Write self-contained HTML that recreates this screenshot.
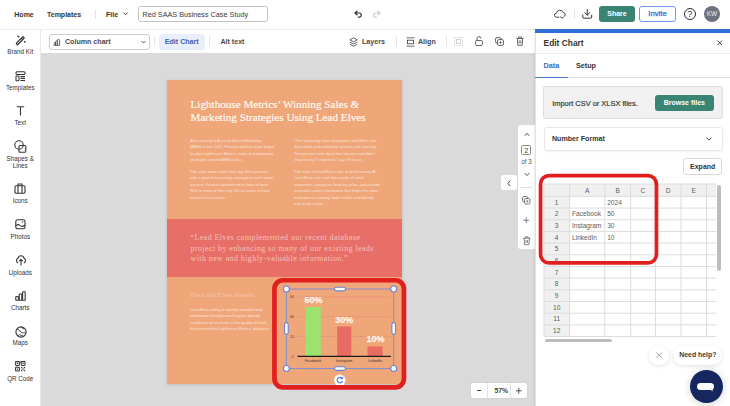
<!DOCTYPE html>
<html><head><meta charset="utf-8">
<style>
*{box-sizing:border-box;margin:0;padding:0}
html,body{width:730px;height:406px;overflow:hidden;background:#fff;font-family:"Liberation Sans",sans-serif;color:#2a2a2a}
.a{position:absolute}
.t{position:absolute;white-space:nowrap;line-height:1}
svg{position:absolute;overflow:visible}
.sb{font-size:6.3px;color:#333;text-align:center;width:40.5px;left:0}
.tb{font-size:7.1px;font-weight:bold;color:#4a4a4a}
.dt{position:absolute;font-size:7.8px;line-height:13px;color:#fff3ea;opacity:.8;white-space:nowrap;transform:scale(.5);transform-origin:0 0}
.cell{position:absolute;font-size:6.6px;color:#5e5e5e;line-height:1;white-space:nowrap}
</style></head><body>

<!-- ============ CANVAS ============ -->
<div class="a" style="left:41px;top:53px;width:494px;height:353px;background:#dadada"></div>


<!-- ============ DOC ============ -->
<div class="a" style="left:167px;top:80px;width:235px;height:303.5px;background:#efa679;box-shadow:0 1px 3px rgba(0,0,0,.13)"></div>
<div class="a" style="left:167px;top:219.2px;width:235px;height:57.4px;background:#e76f67"></div>
<div id="ttl" class="t" style="left:190.5px;top:98px;font-family:'Liberation Serif',serif;font-size:11.15px;line-height:12.7px;color:#fff8f0;-webkit-text-stroke:0.2px #fff8f0">Lighthouse Metrics&#8217; Winning Sales &amp;<br>Marketing Strategies Using Lead Elves</div>
<div class="dt" style="left:190px;top:136.9px">After moving to Account Based Marketing<br>(ABM) in late 2021, Frances and her team began<br>to align Lighthouse Metrics&#8217; sales and marketing<br>strategies around ABM tactics.</div>
<div class="dt" style="left:190px;top:167.9px">The sales team chose their top 100 accounts<br>with a goal of increasing coverage in each major<br>account. Frances determined to have at least<br>90% or more of their top 100 accounts to have<br>at least 4-6 contacts.</div>
<div class="dt" style="left:294px;top:136.9px">&#8220;The marketing team integrated Lead Elves into<br>their email and marketing systems one morning.<br>The process took about five minutes and didn&#8217;t<br>require any IT expertise,&#8221; says Frances.</div>
<div class="dt" style="left:294px;top:167.9px">The value of Lead Elves was in its Discovery AI.<br>Lead Elves can scan thousands of email<br>responses, categorize them by value, and provide<br>essential contact information that helps the sales<br>team pursue existing leads further and identify<br>new leads easily.</div>
<div id="quote" class="t" style="left:190.5px;top:233px;font-family:'Liberation Serif',serif;font-size:7.9px;letter-spacing:0.45px;line-height:10.6px;color:#f4b8ae;-webkit-text-stroke:0.1px #f4b8ae"><span>&#8220;Lead Elves complemented our recent database</span><br><span>project by enhancing so many of our existing leads</span><br><span>with new and highly-valuable information.&#8221;</span></div>
<div id="res" class="t" style="left:189.5px;top:291.9px;font-family:'Liberation Serif',serif;font-size:6.9px;color:#f6c6ad">The Lead Elves Results</div>
<div class="dt" style="left:189.5px;top:306px">Lead Elves ability to identify valuable lead<br>information through email replies directly<br>resulted in an increase in the quality of leads<br>that entered the Lighthouse Metrics' database.</div>


<!-- ============ CHART ============ -->
<svg style="left:270px;top:275px" width="140" height="120" viewBox="270 275 140 120">
  <g stroke="#ea8c78" stroke-width="0.6">
    <line x1="297.5" y1="296.8" x2="390.5" y2="296.8"/>
    <line x1="297.5" y1="316.6" x2="390.5" y2="316.6"/>
    <line x1="297.5" y1="336.5" x2="390.5" y2="336.5"/>
  </g>
  <g font-family="Liberation Sans" font-size="3.7" fill="#5e4033" text-anchor="end">
    <text x="294" y="298.1">60</text><text x="294" y="317.9">40</text><text x="294" y="337.8">20</text><text x="293.6" y="357.6">0</text>
  </g>
  <rect x="305.7" y="307" width="15.1" height="49.3" fill="#9be36c"/>
  <rect x="337.2" y="326.5" width="14.1" height="29.8" fill="#e86c62"/>
  <rect x="367.5" y="346.4" width="15.1" height="9.9" fill="#e86c62"/>
  <line x1="297.5" y1="356.3" x2="390.9" y2="356.3" stroke="#1a1a1a" stroke-width="1.3"/>
  <g font-family="Liberation Sans" font-size="3.7" fill="#4a3025" text-anchor="middle">
    <text x="313.2" y="362.3">Facebook</text><text x="344.2" y="362.3">Instagram</text><text x="375" y="362.3">LinkedIn</text>
  </g>
  <g font-family="Liberation Sans" font-size="9" font-weight="bold" fill="#fff4ec" stroke="#fff4ec" stroke-width="0.25" text-anchor="middle">
    <text x="313.4" y="302.9">50%</text><text x="344.3" y="323">30%</text><text x="375.4" y="341.9">10%</text>
  </g>
  <!-- selection -->
  <rect x="286.4" y="289" width="107.3" height="79.5" fill="none" stroke="#7b8dd4" stroke-width="0.95"/>
  <g fill="#fff" stroke="#6a83d8" stroke-width="1.1">
    <circle cx="286.4" cy="289" r="3"/><circle cx="393.7" cy="289" r="3"/><circle cx="286.4" cy="368.5" r="3"/><circle cx="393.7" cy="368.5" r="3"/>
    <rect x="334.5" y="287.3" width="11" height="3.6" rx="1.8"/><rect x="334.5" y="366.8" width="11" height="3.6" rx="1.8"/>
    <rect x="284.6" y="322.6" width="3.6" height="11.8" rx="1.8"/><rect x="391.9" y="322.6" width="3.6" height="11.8" rx="1.8"/>
  </g>
  <circle cx="339.8" cy="380.2" r="5.7" fill="#fff"/>
  <path d="M342 378.4 A2.7 2.7 0 1 0 342.5 381" fill="none" stroke="#5b7fd8" stroke-width="1.2"/>
  <path d="M343 376.6 L342.6 379 L340.2 378.6" fill="#5b7fd8" stroke="#5b7fd8" stroke-width="0.6"/>
</svg>
<!-- red outlines -->
<svg style="left:0;top:0" width="730" height="406" viewBox="0 0 730 406"><rect x="274.45" y="280.25" width="129.5" height="107.1" rx="8.5" fill="none" stroke="#e21f1f" stroke-width="4.7"/></svg>

<!-- page nav -->
<div class="a" style="left:518px;top:125.3px;width:17px;height:124px;background:#fff;border-radius:3px 0 0 3px"></div>
<svg style="left:523.5px;top:132px" width="6" height="5" viewBox="0 0 6 5"><path d="M0.7 3.8 L3 1.4 L5.3 3.8" fill="none" stroke="#444" stroke-width="0.95"/></svg>
<div class="a" style="left:521px;top:144.7px;width:10.4px;height:10.8px;border:0.8px solid #8a8a8a;border-radius:1.5px"></div>
<div class="t" style="left:521px;top:146.6px;width:10.4px;text-align:center;font-size:7.4px;color:#444">2</div>
<div class="t" style="left:518.5px;top:159px;width:16px;text-align:center;font-size:6.3px;color:#555">of 3</div>
<svg style="left:523.5px;top:172px" width="6" height="5" viewBox="0 0 6 5"><path d="M0.7 1.1 L3 3.5 L5.3 1.1" fill="none" stroke="#444" stroke-width="0.95"/></svg>
<div class="a" style="left:520px;top:186.5px;width:12px;height:0.8px;background:#e0e0e0"></div>
<svg style="left:522.4px;top:195.5px" width="8.5" height="8.5" viewBox="0 0 8.5 8.5"><rect x="0.5" y="0.5" width="5.3" height="5.3" rx="1.4" fill="none" stroke="#555" stroke-width="0.8"/><rect x="2.5" y="2.5" width="5.5" height="5.5" rx="1.4" fill="#fff" stroke="#555" stroke-width="0.8"/><path d="M5.25 3.9 V6.6 M3.9 5.25 H6.6" stroke="#555" stroke-width="0.6"/></svg>
<svg style="left:523.3px;top:217px" width="6.5" height="6.5" viewBox="0 0 6.5 6.5"><path d="M3.25 0.3 V6.2 M0.3 3.25 H6.2" stroke="#5f6b80" stroke-width="0.85"/></svg>
<svg style="left:523px;top:236px" width="7.5" height="9.2" viewBox="0 0 7.5 9.2"><path d="M0.4 2.2 H7.1 M2.4 2.2 V0.8 H5.1 V2.2 M1.1 2.2 L1.6 8.7 H5.9 L6.4 2.2 M3 4.2 V6.8 M4.5 4.2 V6.8" fill="none" stroke="#555" stroke-width="0.75"/></svg>
<div class="a" style="left:501.2px;top:175.3px;width:15.5px;height:15px;background:#fff;border-radius:2.5px"></div>
<svg style="left:507px;top:179.5px" width="4" height="7" viewBox="0 0 4 7"><path d="M3.2 0.7 L0.9 3.4 L3.2 6.1" fill="none" stroke="#444" stroke-width="1"/></svg>

<!-- zoom -->
<div class="a" style="left:471px;top:382.9px;width:55.6px;height:15.4px;background:#fff;border-radius:2px;box-shadow:0 0 1.5px rgba(0,0,0,.15)"></div>
<div class="a" style="left:487px;top:382.9px;width:0.7px;height:15.4px;background:#e4e4e4"></div>
<div class="a" style="left:510.2px;top:382.9px;width:0.7px;height:15.4px;background:#e4e4e4"></div>
<div class="a" style="left:477px;top:390.3px;width:3.8px;height:0.9px;background:#444"></div>
<div class="t" style="left:494.5px;top:387.5px;font-size:6.8px;font-weight:bold;color:#444">57%</div>
<svg style="left:516.4px;top:387.8px" width="5.6" height="5.6" viewBox="0 0 5.6 5.6"><path d="M2.8 0 V5.6 M0 2.8 H5.6" stroke="#444" stroke-width="0.9"/></svg>

<!-- ============ TOP BAR ============ -->
<div class="a" style="left:0;top:0;width:730px;height:30px;background:#fff;border-bottom:1px solid #ebebeb;box-shadow:0 1px 2px rgba(0,0,0,.035)"></div>
<div class="t" style="left:14.3px;top:10.8px;font-size:7px;font-weight:bold;color:#333">Home</div>
<div class="t" style="left:47px;top:10.8px;font-size:7px;font-weight:bold;color:#333">Templates</div>
<div class="a" style="left:95px;top:10px;width:1px;height:9px;background:#e4e4e4"></div>
<div class="t" style="left:106px;top:10.8px;font-size:7px;font-weight:bold;color:#333">File</div>
<svg style="left:122.8px;top:12.3px" width="5" height="4" viewBox="0 0 5 4"><path d="M0.4 0.6 L2.5 2.8 L4.6 0.6" fill="none" stroke="#444" stroke-width="1"/></svg>
<div class="a" style="left:138px;top:5.8px;width:130px;height:16.5px;border:1px solid #c4c4c4;border-radius:2.5px"></div>
<div class="t" style="left:142.5px;top:10.5px;font-size:7.25px;color:#3a3a3a">Red SAAS Business Case Study</div>
<!-- undo redo -->
<svg style="left:354px;top:10px" width="9" height="8" viewBox="0 0 9 8"><path d="M3 1.2 L1 3 L3 4.8 M1.2 3 H5.2 A2.1 2.1 0 0 1 5.2 7.2 H4.3" fill="none" stroke="#2e2e2e" stroke-width="1.2" stroke-linecap="round" stroke-linejoin="round"/></svg>
<svg style="left:372px;top:10px" width="9" height="8" viewBox="0 0 9 8"><path d="M6 1.2 L8 3 L6 4.8 M7.8 3 H3.8 A2.1 2.1 0 0 0 3.8 7.2 H4.7" fill="none" stroke="#c8c8c8" stroke-width="1.1" stroke-linecap="round" stroke-linejoin="round"/></svg>
<!-- cloud -->
<svg style="left:554px;top:10px" width="13" height="10" viewBox="0 0 13 10"><path d="M4.9 7.2 H2.6 A2 2 0 0 1 2.4 3.2 A3.6 3.6 0 0 1 9.3 2.6 A2 2 0 0 1 10.5 6.1 L8.3 8.1 L6.4 6.9" fill="none" stroke="#444" stroke-width="1" stroke-linecap="round" stroke-linejoin="round"/></svg>
<div class="a" style="left:574px;top:9px;width:1px;height:10px;background:#e2e2e2"></div>
<!-- download -->
<svg style="left:581.5px;top:9px" width="11" height="10" viewBox="0 0 11 10"><path d="M5.25 0.6 V6 M2.7 3.6 L5.25 6.1 L7.8 3.6 M0.8 6 V8 Q0.8 9.2 2 9.2 H8.5 Q9.7 9.2 9.7 8 V6" fill="none" stroke="#333" stroke-width="1" stroke-linecap="round" stroke-linejoin="round"/></svg>
<div class="a" style="left:599px;top:6px;width:36px;height:16px;background:#3a8474;border-radius:3px"></div>
<div class="t" style="left:599px;top:10px;width:36px;text-align:center;font-size:7px;font-weight:bold;color:#fff">Share</div>
<div class="a" style="left:639px;top:5.5px;width:37px;height:16.5px;border:1px solid #6f9ae8;border-radius:3px"></div>
<div class="t" style="left:639px;top:10px;width:37px;text-align:center;font-size:7.7px;color:#3a6ad4;-webkit-text-stroke:0.25px #3a6ad4">Invite</div>
<div class="a" style="left:683.5px;top:7.8px;width:12.6px;height:12.6px;border:1.15px solid #2a2a2a;border-radius:50%"></div>
<div class="t" style="left:683.5px;top:9.6px;width:12.4px;text-align:center;font-size:9px;color:#333">?</div>
<div class="a" style="left:704px;top:6px;width:16px;height:16px;background:#6c737f;border-radius:50%"></div>
<div class="t" style="left:704px;top:10.5px;width:16px;text-align:center;font-size:6.4px;color:#eef0f2">KW</div>

<!-- ============ SIDEBAR ============ -->
<div class="a" style="left:0;top:30px;width:41px;height:376px;background:#fff;border-right:1px solid #e9e9e9"></div>
<!-- brand kit -->
<svg style="left:15px;top:35px" width="11" height="10" viewBox="0 0 11 10"><path d="M1.5 8.1 L7.6 2 Q8 1.6 8.4 2 L9 2.6 Q9.4 3 9 3.4 L2.9 9.5 Q2.5 9.9 2.1 9.5 L1.5 8.9 Q1.1 8.5 1.5 8.1 Z" fill="none" stroke="#2e2e2e" stroke-width="1.15"/><path d="M6.3 3.3 L7.7 4.7" stroke="#2e2e2e" stroke-width="1.05"/><path d="M3.3 0.5 V2.5 M2.3 1.5 H4.3 M9.7 5.9 V7.7 M8.8 6.8 H10.6" stroke="#333" stroke-width="0.85"/></svg>
<div class="t sb" style="top:49.4px">Brand Kit</div>
<!-- templates -->
<svg style="left:15px;top:71px" width="11" height="11" viewBox="0 0 11 11"><rect x="1" y="0.8" width="9" height="2.6" rx="1" fill="none" stroke="#333" stroke-width="1.05"/><rect x="1" y="5" width="3" height="4.8" rx="0.5" fill="none" stroke="#333" stroke-width="1.05"/><path d="M5.5 5.6 H10 M5.5 7.5 H10 M5.5 9.4 H10" stroke="#333" stroke-width="1.05"/></svg>
<div class="t sb" style="top:84.9px">Templates</div>
<!-- text -->
<svg style="left:16px;top:106px" width="9" height="10" viewBox="0 0 9 10"><path d="M0.8 0.8 H8.2 M4.5 0.8 V9.5" fill="none" stroke="#333" stroke-width="1.1"/></svg>
<div class="t sb" style="top:120.4px">Text</div>
<!-- shapes -->
<svg style="left:14px;top:140px" width="13" height="14" viewBox="0 0 13 14"><circle cx="5" cy="5" r="4.2" fill="none" stroke="#333" stroke-width="1.1"/><rect x="5" y="5.5" width="6.8" height="6.8" rx="1" fill="none" stroke="#333" stroke-width="1.1"/></svg>
<div class="t sb" style="top:156.4px">Shapes &amp;</div>
<div class="t sb" style="top:163.4px">Lines</div>
<!-- icons -->
<svg style="left:14px;top:183px" width="12" height="11" viewBox="0 0 12 11"><rect x="1" y="2.8" width="10" height="7.5" rx="1.2" fill="none" stroke="#333" stroke-width="1.1"/><path d="M4 10.3 V1 H8 V10.3" fill="none" stroke="#333" stroke-width="1.1"/></svg>
<div class="t sb" style="top:198.4px">Icons</div>
<!-- photos -->
<svg style="left:15px;top:219px" width="11" height="11" viewBox="0 0 11 11"><rect x="0.8" y="0.8" width="9.2" height="9" rx="1.8" fill="none" stroke="#333" stroke-width="1.1"/><path d="M0.8 7 Q3 4.5 5 6.5 T10 6" fill="none" stroke="#333" stroke-width="1.05"/><circle cx="7.6" cy="3" r="0.7" fill="#333"/></svg>
<div class="t sb" style="top:234.4px">Photos</div>
<!-- uploads -->
<svg style="left:14.5px;top:255px" width="12" height="11" viewBox="0 0 12 11"><path d="M3.2 8 A2.6 2.6 0 0 1 2.8 3.3 A3.3 3.3 0 0 1 9.2 3.3 A2.6 2.6 0 0 1 8.8 8 M6 10.5 V4.5 M4.3 6.2 L6 4.5 L7.7 6.2" fill="none" stroke="#333" stroke-width="1.1"/></svg>
<div class="t sb" style="top:269.9px">Uploads</div>
<!-- charts -->
<svg style="left:15px;top:291px" width="11" height="10" viewBox="0 0 11 10"><rect x="0.8" y="5.5" width="2.6" height="3.8" rx="0.4" fill="none" stroke="#333" stroke-width="1.1"/><rect x="4.2" y="3" width="2.6" height="6.3" rx="0.4" fill="none" stroke="#333" stroke-width="1.1"/><rect x="7.6" y="0.7" width="2.6" height="8.6" rx="0.4" fill="none" stroke="#333" stroke-width="1.1"/></svg>
<div class="t sb" style="top:305.4px">Charts</div>
<!-- maps -->
<svg style="left:14.5px;top:325.5px" width="12" height="12" viewBox="0 0 12 12"><circle cx="6" cy="6" r="5.1" fill="none" stroke="#333" stroke-width="1.1"/><path d="M2.2 3 Q4.5 3.5 4.5 5 Q6.5 5.2 7 7 Q8.5 6.5 10.5 6.8 M3 9.5 Q4.5 8 6.5 9.5 Q8 9.2 8.5 10.5 M6 1 Q7 2.5 9 2.8" fill="none" stroke="#333" stroke-width="0.85"/></svg>
<div class="t sb" style="top:340.4px">Maps</div>
<!-- qr -->
<svg style="left:15px;top:360.7px" width="11" height="11" viewBox="0 0 11 11"><g fill="none" stroke="#333" stroke-width="1.05"><rect x="0.6" y="0.6" width="3.8" height="3.8" rx="0.6"/><rect x="6.2" y="0.6" width="3.8" height="3.8" rx="0.6"/><rect x="0.6" y="6.2" width="3.8" height="3.8" rx="0.6"/></g><g fill="#333"><rect x="1.9" y="1.9" width="1.2" height="1.2"/><rect x="7.5" y="1.9" width="1.2" height="1.2"/><rect x="1.9" y="7.5" width="1.2" height="1.2"/><rect x="6" y="6" width="1.3" height="1.3"/><rect x="8.8" y="6" width="1.3" height="1.3"/><rect x="6" y="8.9" width="1.3" height="1.3"/><rect x="7.4" y="7.4" width="1.3" height="1.3"/><rect x="8.8" y="8.9" width="1.3" height="1.3"/><rect x="4.8" y="0.6" width="1" height="1.2"/></g></svg>
<div class="t sb" style="top:376.4px">QR Code</div>

<!-- ============ TOOLBAR ============ -->
<div class="a" style="left:41px;top:30px;width:494px;height:23px;background:#fff"></div>
<div class="a" style="left:49px;top:33.5px;width:101px;height:16.2px;border:1px solid #cdcdcd;border-radius:3px"></div>
<svg style="left:53px;top:38.5px" width="8" height="7" viewBox="0 0 8 7"><path d="M0.8 6.4 H6.8 M1.2 6 V4.2 Q1.2 3.6 1.8 3.6 H2.6 V6 M2.6 6 V2.8 Q2.6 2 3.4 2 H4.4 V6 M4.4 6 V1.2 Q4.4 0.6 5 0.6 H5.8 Q6.6 0.6 6.6 1.3 V6" fill="none" stroke="#555" stroke-width="0.9"/></svg>
<div class="t tb" style="left:65px;top:39px">Column chart</div>
<svg style="left:140.5px;top:40px" width="5" height="4" viewBox="0 0 5 4"><path d="M0.5 1 L2.5 3 L4.5 1" fill="none" stroke="#444" stroke-width="0.9"/></svg>
<div class="a" style="left:154px;top:36px;width:1px;height:10px;background:#e6e6e6"></div>
<div class="a" style="left:159px;top:34px;width:46px;height:15.7px;background:#e9effa;border-radius:3px"></div>
<div class="t tb" style="left:164.8px;top:39px;color:#3a63b3">Edit Chart</div>
<div class="a" style="left:209px;top:36px;width:1px;height:10px;background:#e6e6e6"></div>
<div class="t tb" style="left:220.4px;top:39px">Alt text</div>
<!-- layers -->
<svg style="left:349px;top:36.5px" width="9" height="10" viewBox="0 0 9 10"><path d="M4.5 0.8 L8.2 2.8 L4.5 4.8 L0.8 2.8 Z M0.8 5 L4.5 7 L8.2 5 M0.8 7.2 L4.5 9.2 L8.2 7.2" fill="none" stroke="#444" stroke-width="0.85"/></svg>
<div class="t tb" style="left:362px;top:39px">Layers</div>
<div class="a" style="left:395.5px;top:36px;width:1px;height:10px;background:#e6e6e6"></div>
<svg style="left:406px;top:36.5px" width="9" height="10" viewBox="0 0 9 10"><path d="M0.5 0.8 H8.5 M0.5 9.2 H8.5" stroke="#555" stroke-width="0.85"/><rect x="1.5" y="3.2" width="6" height="3.6" fill="none" stroke="#444" stroke-width="0.85"/></svg>
<div class="t tb" style="left:418px;top:39px">Align</div>
<div class="a" style="left:445.5px;top:36px;width:1px;height:10px;background:#e6e6e6"></div>
<svg style="left:454px;top:37px" width="9" height="9" viewBox="0 0 9 9"><path d="M0.5 0.5 H8.5 V8.5 H0.5 Z" fill="none" stroke="#c8c8c8" stroke-width="0.8" stroke-dasharray="1.2 0.8"/><rect x="2.5" y="2.5" width="4" height="4" fill="none" stroke="#c8c8c8" stroke-width="0.8"/></svg>
<svg style="left:475px;top:36px" width="8" height="10" viewBox="0 0 8 10"><rect x="0.6" y="4.5" width="6.8" height="5" rx="1" fill="none" stroke="#444" stroke-width="0.85"/><path d="M2 4.5 V2.8 A2 2 0 0 1 6 2.4" fill="none" stroke="#444" stroke-width="0.85"/></svg>
<svg style="left:495px;top:37px" width="9" height="9" viewBox="0 0 9 9"><rect x="0.6" y="0.6" width="5.5" height="5.5" rx="1.3" fill="none" stroke="#444" stroke-width="0.85"/><rect x="2.6" y="2.6" width="5.8" height="5.8" rx="1.3" fill="#fff" stroke="#444" stroke-width="0.85"/><path d="M5.5 4.2 V6.8 M4.2 5.5 H6.8" stroke="#444" stroke-width="0.7"/></svg>
<svg style="left:515.5px;top:36px" width="8" height="10" viewBox="0 0 8 10"><path d="M0.5 2.5 H7.5 M2.5 2.5 V1 H5.5 V2.5 M1.3 2.5 L1.8 9.3 H6.2 L6.7 2.5 M3.2 4.5 V7.5 M4.8 4.5 V7.5" fill="none" stroke="#444" stroke-width="0.8"/></svg>

<!-- ============ RIGHT PANEL ============ -->
<div class="a" style="left:535px;top:29px;width:195px;height:377px;background:#fff;border-left:1px solid #e2e2e2;box-shadow:-1px 0 2px rgba(0,0,0,.08)"></div>
<div class="a" style="left:535px;top:29px;width:195px;height:4px;background:#2f6fd8"></div>
<div class="t" style="left:543.6px;top:38.8px;font-size:8.4px;font-weight:bold;color:#333">Edit Chart</div>
<svg style="left:717px;top:40px" width="5.5" height="5.5" viewBox="0 0 5.5 5.5"><path d="M0.5 0.5 L5 5 M5 0.5 L0.5 5" stroke="#333" stroke-width="0.9"/></svg>
<div class="a" style="left:535px;top:53px;width:195px;height:1px;background:#ececec"></div>
<div class="t" style="left:543.6px;top:62px;font-size:7.2px;font-weight:bold;color:#3a6cc0">Data</div>
<div class="t" style="left:576px;top:62px;font-size:7.2px;font-weight:bold;color:#333">Setup</div>
<div class="a" style="left:535px;top:77px;width:195px;height:1px;background:#dedede"></div>
<div class="a" style="left:535px;top:76.5px;width:33px;height:1.5px;background:#4b78c8"></div>

<div class="a" style="left:543px;top:86px;width:179.5px;height:33px;background:#f1f1f1;border-radius:2px"></div><svg style="left:543px;top:86px" width="179.5" height="33" viewBox="0 0 179.5 33"><rect x="0.5" y="0.5" width="178.5" height="32" rx="2" fill="none" stroke="#cfcfcf" stroke-width="1" stroke-dasharray="1.3 1"/></svg>
<div class="t" style="left:552.2px;top:99.8px;font-size:7.45px;color:#3a3a3a;-webkit-text-stroke:0.2px #3a3a3a">Import CSV or XLSX files.</div>
<div class="a" style="left:655px;top:94.8px;width:58.7px;height:16px;background:#3a8474;border-radius:3px"></div>
<div class="t" style="left:655px;top:99px;width:58.7px;text-align:center;font-size:7px;font-weight:bold;color:#fff">Browse files</div>

<div class="a" style="left:543.5px;top:126.8px;width:179px;height:24px;border:1px solid #e6e6e6;border-radius:3px;box-shadow:0 1px 2px rgba(0,0,0,.05)"></div>
<div class="t" style="left:552px;top:135.8px;font-size:7.1px;font-weight:bold;color:#333">Number Format</div>
<svg style="left:705.5px;top:137px" width="6" height="4" viewBox="0 0 6 4"><path d="M0.5 0.7 L3 3.1 L5.5 0.7" fill="none" stroke="#444" stroke-width="1"/></svg>

<div class="a" style="left:683px;top:158.3px;width:39.4px;height:16.5px;border:1px solid #d8d8d8;border-radius:3px"></div>
<div class="t" style="left:683px;top:163px;width:39.4px;text-align:center;font-size:7px;font-weight:bold;color:#333">Expand</div>

<!-- spreadsheet -->
<svg style="left:543.9px;top:183.5px" width="172.1" height="152.6" viewBox="0 0 172.1 152.6">
<rect x="0" y="0" width="172.1" height="12.4" fill="#f0f0f0"/>
<rect x="0" y="0" width="25.6" height="152.6" fill="#f0f0f0"/>
<line x1="0.00" y1="0" x2="0.00" y2="152.6" stroke="#dddddd" stroke-width="1"/>
<line x1="25.60" y1="0" x2="25.60" y2="152.6" stroke="#dddddd" stroke-width="1"/>
<line x1="60.80" y1="0" x2="60.80" y2="152.6" stroke="#dddddd" stroke-width="1"/>
<line x1="86.70" y1="0" x2="86.70" y2="152.6" stroke="#dddddd" stroke-width="1"/>
<line x1="111.50" y1="0" x2="111.50" y2="152.6" stroke="#dddddd" stroke-width="1"/>
<line x1="137.10" y1="0" x2="137.10" y2="152.6" stroke="#dddddd" stroke-width="1"/>
<line x1="162.50" y1="0" x2="162.50" y2="152.6" stroke="#dddddd" stroke-width="1"/>
<line x1="0" y1="0.00" x2="172.1" y2="0.00" stroke="#dddddd" stroke-width="1"/>
<line x1="0" y1="12.40" x2="172.1" y2="12.40" stroke="#dddddd" stroke-width="1"/>
<line x1="0" y1="24.08" x2="172.1" y2="24.08" stroke="#dddddd" stroke-width="1"/>
<line x1="0" y1="35.76" x2="172.1" y2="35.76" stroke="#dddddd" stroke-width="1"/>
<line x1="0" y1="47.44" x2="172.1" y2="47.44" stroke="#dddddd" stroke-width="1"/>
<line x1="0" y1="59.12" x2="172.1" y2="59.12" stroke="#dddddd" stroke-width="1"/>
<line x1="0" y1="70.80" x2="172.1" y2="70.80" stroke="#dddddd" stroke-width="1"/>
<line x1="0" y1="82.48" x2="172.1" y2="82.48" stroke="#dddddd" stroke-width="1"/>
<line x1="0" y1="94.16" x2="172.1" y2="94.16" stroke="#dddddd" stroke-width="1"/>
<line x1="0" y1="105.84" x2="172.1" y2="105.84" stroke="#dddddd" stroke-width="1"/>
<line x1="0" y1="117.52" x2="172.1" y2="117.52" stroke="#dddddd" stroke-width="1"/>
<line x1="0" y1="129.20" x2="172.1" y2="129.20" stroke="#dddddd" stroke-width="1"/>
<line x1="0" y1="140.88" x2="172.1" y2="140.88" stroke="#dddddd" stroke-width="1"/>
<line x1="0" y1="152.56" x2="172.1" y2="152.56" stroke="#dddddd" stroke-width="1"/>
</svg>
<div class="cell" style="left:577.1px;width:20px;text-align:center;top:187.7px">A</div>
<div class="cell" style="left:607.7px;width:20px;text-align:center;top:187.7px">B</div>
<div class="cell" style="left:633.0px;width:20px;text-align:center;top:187.7px">C</div>
<div class="cell" style="left:658.2px;width:20px;text-align:center;top:187.7px">D</div>
<div class="cell" style="left:683.7px;width:20px;text-align:center;top:187.7px">E</div>
<div class="cell" style="left:543.9px;width:25.6px;text-align:center;top:199.5px">1</div>
<div class="cell" style="left:543.9px;width:25.6px;text-align:center;top:211.2px">2</div>
<div class="cell" style="left:543.9px;width:25.6px;text-align:center;top:222.9px">3</div>
<div class="cell" style="left:543.9px;width:25.6px;text-align:center;top:234.5px">4</div>
<div class="cell" style="left:543.9px;width:25.6px;text-align:center;top:246.2px">5</div>
<div class="cell" style="left:543.9px;width:25.6px;text-align:center;top:257.9px">6</div>
<div class="cell" style="left:543.9px;width:25.6px;text-align:center;top:269.6px">7</div>
<div class="cell" style="left:543.9px;width:25.6px;text-align:center;top:281.3px">8</div>
<div class="cell" style="left:543.9px;width:25.6px;text-align:center;top:292.9px">9</div>
<div class="cell" style="left:543.9px;width:25.6px;text-align:center;top:304.6px">10</div>
<div class="cell" style="left:543.9px;width:25.6px;text-align:center;top:316.3px">11</div>
<div class="cell" style="left:543.9px;width:25.6px;text-align:center;top:328.0px">12</div>
<div class="cell" style="left:607.2px;top:199.5px">2024</div>
<div class="cell" style="left:572.0px;top:211.2px">Facebook</div>
<div class="cell" style="left:607.2px;top:211.2px">50</div>
<div class="cell" style="left:572.0px;top:222.9px">Instagram</div>
<div class="cell" style="left:607.2px;top:222.9px">30</div>
<div class="cell" style="left:572.0px;top:234.5px">LinkedIn</div>
<div class="cell" style="left:607.2px;top:234.5px">10</div>

<div class="a" style="left:545.2px;top:338.8px;width:67px;height:3.6px;background:#bdbdbd;border-radius:2px"></div>
<div class="a" style="left:717px;top:184.8px;width:3.8px;height:86px;background:#bdbdbd;border-radius:2px"></div>

<!-- help -->
<div class="a" style="left:649px;top:345.5px;width:19.5px;height:19.5px;background:#fff;border-radius:50%;box-shadow:0 1px 4px rgba(0,0,0,.12)"></div>
<svg style="left:655.5px;top:352px" width="6.5" height="6.5" viewBox="0 0 6.5 6.5"><path d="M0.5 0.5 L6 6 M6 0.5 L0.5 6" stroke="#888" stroke-width="0.8"/></svg>
<div class="a" style="left:673px;top:345.5px;width:48.5px;height:19.8px;background:#fff;border-radius:10px;box-shadow:0 1px 4px rgba(0,0,0,.12)"></div>
<div class="t" style="left:679.3px;top:352.2px;font-size:6.9px;font-weight:bold;color:#3a3a3a">Need help?</div>
<div class="a" style="left:689.5px;top:370px;width:33px;height:33px;background:#15275e;border-radius:50%;box-shadow:0 1px 8px rgba(0,0,0,.18)"></div>
<div class="a" style="left:697.3px;top:382.5px;width:17.2px;height:7px;background:#fff;border-radius:3.5px"></div>
<svg style="left:709px;top:388px" width="4" height="4" viewBox="0 0 4 4"><path d="M0 0 H3.5 V3.5 Z" fill="#fff"/></svg>

<svg style="left:0;top:0" width="730" height="406" viewBox="0 0 730 406"><rect x="540.55" y="175.55" width="115.9" height="87.4" rx="8.5" fill="none" stroke="#e21f1f" stroke-width="3.7"/></svg>
</body></html>
